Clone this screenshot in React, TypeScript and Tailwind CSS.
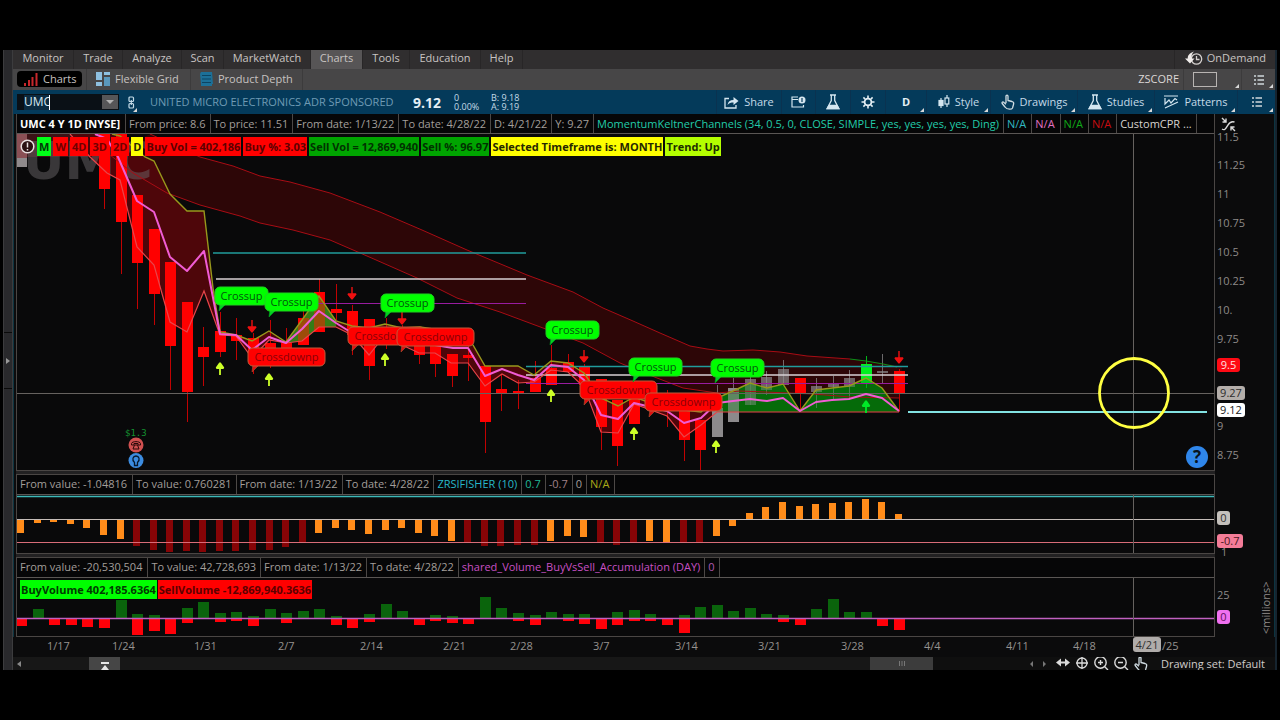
import React from "react";

const slot = (i: number) => 104 + 16.56 * i;

type Candle = [number, number, number, number, string];
const R = "#ff0000";
const G = "#8c8a8c";
const candles: Candle[] = [
  [134, 189, 134, 209, R], [134, 222, 134, 274, R], [195, 263, 195, 309, R], [229, 294, 229, 325, R],
  [262, 346, 262, 390, R], [302, 392, 302, 422, R], [347, 357, 327, 386, R], [331, 352, 312, 357, R],
  [335, 341, 318, 360, R], [338, 362, 333, 374, R], [343, 362, 320, 368, R], [343, 350, 328, 350, R],
  [318, 345, 310, 345, R], [292, 332, 279, 332, R], [309, 313, 284, 320, R], [311, 335, 305, 355, R],
  [319, 366, 319, 380, R], [335, 345, 318, 349, R], [333, 345, 325, 350, R], [340, 355, 340, 364, R],
  [340, 364, 340, 377, R], [354, 376, 354, 387, R], [355, 358, 345, 381, R], [366, 422, 366, 453, R],
  [389, 394, 375, 411, R], [391, 393, 380, 409, R], [378, 392, 361, 392, R], [368, 385, 345, 385, R],
  [362, 372, 354, 372, R], [367, 385, 364, 400, R], [379, 427, 379, 450, R], [400, 446, 400, 466, R],
  [395, 424, 395, 424, R], [395, 400, 390, 412, R], [398, 402, 390, 427, R], [408, 440, 408, 461, R],
  [420, 450, 420, 470, R], [408, 437, 385, 437, G], [388, 422, 378, 422, G], [379, 405, 372, 405, G],
  [377, 390, 371, 395, G], [369, 385, 360, 385, G], [378, 394, 378, 412, R], [386, 392, 378, 408, G],
  [384, 387, 376, 400, G], [378, 387, 370, 398, G], [364, 383, 356, 388, "#00f020"], [371, 373, 354, 383, G],
  [371, 394, 369, 412, R],
];

const upper = "112,134 120,136 145,157 154,161 170,194 187,211 204,211 213,288 220,332 236,335 252,341 269,331 286,342 302,320 319,296 336,321 352,326 369,328 385,324 402,328 420,327 453,332 473,345 485,366 502,366 518,366 534,375 551,361 568,363 584,373 601,398 618,406 634,397 651,403 684,410 701,412 717,398 733,391 750,383 767,388 783,384 800,411 816,390 832,388 849,386 866,378 882,388 899,411";
const lower = "899,412 717,412 701,425 684,437 667,416 651,410 634,404 618,433 601,432 584,387 568,372 551,370 534,382 518,383 502,374 485,386 468,363 451,363 435,353 419,353 402,345 385,335 369,355 352,335 336,327 319,327 302,341 286,343 269,340 252,358 236,336 220,335 204,291 187,332 170,322 154,265 137,247 120,180 107,173 90,157 70,134";
const mid = "95,134 107,139 118,157 137,201 154,212 170,257 187,271 204,251 220,334 236,335 252,350 269,337 286,343 302,329 319,311 336,323 352,333 369,341 385,332 402,336 435,345 453,348 468,348 485,376 502,369 518,375 534,380 551,365 568,367 584,380 601,415 618,419 634,403 651,407 667,411 684,423 701,418 717,403 733,401 750,399 767,401 783,398 800,411 816,402 832,400 849,399 866,394 882,398 899,411";
const bandTop = "150,134 200,157 233,166 260,176 290,182 330,193 380,212 422,230 467,250 527,275 573,292 603,308 633,321 660,333 690,346 707,349 723,351 753,350 780,352 807,356 850,359";
const bandBottom = "899,398 850,397 813,394 740,391 717,393 683,388 657,378 620,363 583,343 543,328 500,312 457,298 417,278 367,256 330,240 293,230 260,223 240,216 200,205 167,193 133,173 110,155";

const Bubble = ({ x, y, kind }: { x: number; y: number; kind: "up" | "down" }) => {
  const up = kind === "up";
  const w = up ? 53 : 77;
  return (
    <g>
      <path
        d={`M${x + 5} ${y + 16} L${x + 4} ${y + 24} L${x + 12} ${y + 16} Z`}
        fill={up ? "#00d020" : "#e01010"}
        stroke={up ? "#00a020" : "#b05030"}
        strokeWidth="0.6"
      />
      <rect x={x} y={y} width={w} height={18} rx={5} fill={up ? "#00ff00" : "#ff0000"} stroke={up ? "#20d020" : "#c05a3a"} />
      <text x={x + w / 2} y={y + 13} textAnchor="middle" fontSize="11" fill={up ? "#00560c" : "#8a0008"}>
        {up ? "Crossup" : "Crossdownp"}
      </text>
    </g>
  );
};

const Arrow = ({ x, y, dir, color }: { x: number; y: number; dir: "up" | "down"; color: string }) =>
  dir === "up" ? (
    <path d={`M${x} ${y + 13}V${y + 3}M${x - 3.5} ${y + 6}L${x} ${y + 1}L${x + 3.5} ${y + 6}Z`} stroke={color} strokeWidth="1.8" fill={color} strokeLinejoin="bevel" />
  ) : (
    <path d={`M${x} ${y}V${y + 10}M${x - 4} ${y + 7}L${x} ${y + 12}L${x + 4} ${y + 7}Z`} stroke={color} strokeWidth="1.4" fill={color} strokeLinejoin="bevel" />
  );

const PriceChart = () => (
  <svg className="block h-[336px] w-full" viewBox="17 134 1197 336" preserveAspectRatio="xMinYMin slice" role="img" aria-label="UMC daily price chart">
    <rect x="17" y="134" width="1197" height="336" fill="#09090a" />
    <rect x="17" y="134" width="80" height="23" fill="#3c1316" />
    <rect x="17" y="134" width="10" height="24" fill="#8a5055" />
    <rect x="17" y="158" width="10" height="9" fill="#8f8a8c" />
    <polygon points={`${bandTop} 883,363 902,367 ${bandBottom}`} fill="#2d0607" />
    <polygon points={`${upper} ${lower}`} fill="#4e060a" />
    <polygon points="269,331 286,342 302,320 319,296 336,321 336,327 319,327 302,341 286,343" fill="#1c6a20" />
    <polygon points="711,400 733,391 750,383 767,388 783,384 800,411 816,390 832,388 849,386 866,378 882,388 899,411 899,412 717,412" fill="#046006" />
    <text x="23" y="179" fontSize="51" fontWeight="700" fill="#6a6668" fillOpacity="0.5" className="font-['DejaVu_Sans',sans-serif]">UMC</text>
    {candles.map(([t, b, wt, wb, c], i) => (
      <g key={i} fill={c}>
        <rect x={Math.round(slot(i))} y={wt} width="1" height={wb - wt} fillOpacity="0.75" />
        <rect x={Math.round(slot(i)) - 5} y={t} width="11" height={b - t} fillOpacity={i > 38 && c === G ? 0.7 : 1} />
      </g>
    ))}
    <polygon points="302,320 319,296 336,321 336,327 319,327 302,341 288,342" fill="#4a8a10" fillOpacity="0.55" />
    <polygon points="711,400 733,391 750,383 767,388 783,384 800,411 816,390 832,388 849,386 866,378 882,388 899,411 717,412" fill="#0a8010" fillOpacity="0.35" />
    <g fill="none">
      <polyline points={bandTop} stroke="#a80c14" />
      <polyline points="850,359 866,361 883,364 897,367" stroke="#0c9018" />
      <polyline points={bandBottom} stroke="#a80c14" />
      <path d="M213 253H526M526 366.5H908" stroke="#209c9c" strokeWidth="1.6" />
      <path d="M216 279H526M526 375H908" stroke="#d8d0d4" strokeWidth="1.4" />
      <path d="M216 303.5H526M526 383.500H908" stroke="#981ca0" strokeWidth="1.2" />
      <path d="M17 393.5H1214M1133.5 134V470" stroke="#66625f" />
      <path d="M908 412H1207" stroke="#82e2e2" strokeWidth="2" />
      <polyline points={lower} stroke="#e8454a" strokeWidth="1.2" />
      <polyline points={upper} stroke="#98981c" strokeWidth="1.4" />
      <polyline points={mid} stroke="#f05cd4" strokeWidth="2" strokeLinejoin="round" />
    </g>
    {[[252, 320], [352, 287], [402, 312], [584, 350], [899, 351]].map(([x, y]) => (
      <Arrow key={x} x={x} y={y} dir="down" color="#f01010" />
    ))}
    {[[220, 362], [269, 373], [385, 353], [551, 389], [634, 427], [716, 440]].map(([x, y]) => (
      <Arrow key={x} x={x} y={y} dir="up" color="#cdff28" />
    ))}
    <Arrow x={866} y={400} dir="up" color="#00e828" />
    <Bubble x={215} y={287} kind="up" />
    <Bubble x={265} y={293} kind="up" />
    <Bubble x={381} y={294} kind="up" />
    <Bubble x={546} y={321} kind="up" />
    <Bubble x={248} y={348} kind="down" />
    <Bubble x={348} y={327} kind="down" />
    <Bubble x={397} y={328} kind="down" />
    <Bubble x={580} y={381} kind="down" />
    <Bubble x={645} y={393} kind="down" />
    <Bubble x={629} y={358} kind="up" />
    <Bubble x={711} y={359} kind="up" />
    <text x="125" y="436" fontSize="9" fill="#149030" className="font-['DejaVu_Sans_Mono',monospace]">$1.3</text>
    <circle cx="136" cy="445" r="7.5" fill="#d05050" />
    <path d="M131.500 443.500C132 441 140 441 140.500 443.500V445H138V443.500H134V445H131.500ZM133 449L134.500 445H137.500L139 449Z" fill="#d05050" stroke="#2a0808" />
    <circle cx="136" cy="460.500" r="7.500" fill="#3c8ce0" />
    <path d="M134.500 462.500C131.500 459.500 133 456 136 456C139 456 140.500 459.500 137.500 462.500V465.500H134.500Z" fill="none" stroke="#06182c" strokeWidth="1.300" />
    <circle cx="1134" cy="393" r="34.500" fill="none" stroke="#ffff42" strokeWidth="2.800" />
    <circle cx="1197" cy="457" r="11" fill="#2f86ea" />
    <text x="1197" y="463" textAnchor="middle" fontSize="17" fontWeight="700" fill="#081420">?</text>
  </svg>
);

const fisher = [533, 523, 522, 524, 528, 535, 539, 546, 550, 552, 551, 552, 551, 551, 550, 550, 547, 543, 533, 528, 530, 534, 530, 528, 533, 536, 541, 542, 546, 546, 545, 545, 541, 536, 537, 542, 545, 542, 541, 542, 542, 542, 536, 526, 513, 507, 502, 506, 504, 503, 502, 499, 502, 514];
const isWeak = (n: number) => (n >= 7 && n <= 17) || (n >= 27 && n <= 31) || (n >= 35 && n <= 37) || n === 40 || n === 41;

const FisherChart = () => (
  <svg className="block h-[58px] w-full" viewBox="17 495 1197 58" preserveAspectRatio="xMinYMin slice" role="img" aria-label="ZRSIFISHER histogram">
    <rect x="17" y="495" width="1197" height="58" fill="#09090a" />
    {fisher.map((v, n) => (
      <rect key={n} x={Math.round(slot(n - 5)) - 4} y={Math.min(v, 519)} width="7" height={Math.abs(v - 519)} fill={isWeak(n) ? "#860406" : "#ff8c1a"} />
    ))}
    <path d="M17 496.500H1214" stroke="#3cb8b8" strokeWidth="1.300" />
    <path d="M17 519.500H1214" stroke="#c4bcb8" />
    <path d="M17 542.500H1214" stroke="#d86c78" />
    <path d="M1133.500 495V553" stroke="#66625f" />
  </svg>
);

const volume: [number, number][] = [
  [0, 8], [9, 0], [0, 7], [0, 7], [0, 9], [0, 10], [18, 0], [4, 17], [3, 13], [0, 16], [10, 5], [16, 0], [5, 4], [6, 3], [2, 8], [9, 0], [5, 5], [7, 0], [9, 0], [2, 7], [0, 10], [4, 4], [14, 0], [7, 0], [0, 7], [3, 3], [2, 5], [0, 6], [21, 0], [10, 0], [5, 3], [3, 7], [6, 0], [4, 3], [4, 6], [0, 11], [6, 7], [8, 3], [4, 3], [0, 7], [3, 15], [11, 0], [13, 0], [7, 0], [10, 0], [4, 1], [3, 4], [0, 7], [9, 0], [19, 0], [6, 0], [6, 0], [0, 8], [0, 12],
];

const VolumeChart = () => (
  <svg className="block h-[58px] w-full" viewBox="17 578 1197 58" preserveAspectRatio="xMinYMin slice" role="img" aria-label="Buy and sell volume">
    <rect x="17" y="578" width="1197" height="58" fill="#09090a" />
    {volume.map(([up, down], n) => (
      <g key={n}>
        <rect x={Math.round(slot(n - 5)) - 5} y={618 - up} width="11" height={up} fill="#0a640c" />
        <rect x={Math.round(slot(n - 5)) - 5} y={618} width="11" height={down} fill="#ff0008" />
      </g>
    ))}
    <path d="M17 618.500H1214" stroke="#c060c0" strokeWidth="1.400" />
    <path d="M1133.500 578V636" stroke="#66625f" />
  </svg>
);

const Tag = ({ x, y, w, text, bg, fg }: { x: number; y: number; w: number; text: string; bg: string; fg: string }) => (
  <g>
    <rect x={x} y={y} width={w} height="14" rx="3" fill={bg} />
    <text x={x + w / 2} y={y + 11} textAnchor="middle" fontSize="11" fill={fg}>{text}</text>
  </g>
);

const prices: [string, number][] = [["11.5", 137], ["11.25", 165], ["11", 194], ["10.75", 223], ["10.5", 252], ["10.25", 281], ["10.", 310], ["9.75", 339], ["9", 426], ["8.75", 455]];

const PriceAxis = () => (
  <svg className="block h-[340px] w-full overflow-visible" viewBox="1215 134 59 340" preserveAspectRatio="xMinYMin slice" role="img" aria-label="Price scale">
    {prices.map(([p, y]) => (
      <text key={p} x="1217" y={y + 4} fontSize="11" fill="#8e8a88">{p}</text>
    ))}
    <Tag x={1217} y={358} w={23} text="9.5" bg="#ff0a14" fg="#ffe0e0" />
    <Tag x={1217} y={386} w={28} text="9.27" bg="#b4aeaa" fg="#2c2c2c" />
    <Tag x={1217} y={403} w={28} text="9.12" bg="#ffffff" fg="#202020" />
  </svg>
);

const Row = ({ cells, text = "leading-[17px]" }: { cells: [string, string][]; text?: string }) => (
  <div className={`flex h-[20px] items-stretch overflow-hidden border-b border-[#5a5654] bg-[#060607] text-[11px] whitespace-nowrap ${text}`}>
    {cells.map(([label, cls], i) => (
      <span key={i} className={`border-r border-[#4c4846] pl-[3px] ${label === "N/A" || i === 0 ? "pr-[5px]" : "pr-[4px]"} ${cls}`}>{label}</span>
    ))}
  </div>
);

const gray = "text-[#a39e9a]";
const Corner = () => <span className="absolute right-[2px] bottom-[2px] h-0 w-0 border-b-[4px] border-l-[4px] border-b-[#d8d8d8] border-l-transparent" />;

const Tool = ({ label, width, children, menu }: { label: string; width: string; children: React.ReactNode; menu?: boolean }) => (
  <button type="button" aria-label={label} className={`relative flex h-full items-center justify-center gap-[5px] border-l border-[#0a3250] text-[11px] text-[#c4dbe8] ${width}`}>
    {children}
    {menu && <Corner />}
  </button>
);

const Flask = () => (
  <svg width="14" height="16" viewBox="0 0 14 16" fill="none" stroke="#d4e6f0" strokeWidth="1.300">
    <path d="M4 1H10M5.300 1V6.500L1.200 14.500H12.800L8.700 6.500V1" />
    <path d="M3 11.500H11L12.800 14.500H1.200Z" fill="#d4e6f0" />
  </svg>
);
const ListIcon = () => (
  <svg width="12" height="12" viewBox="0 0 12 12" stroke="#d0d8dc" strokeWidth="1.500">
    <path d="M1 2H3M4.500 2H11M1 6H3M4.500 6H11M1 10H3M4.500 10H11" />
  </svg>
);
const Hand = () => (
  <svg width="14" height="16" viewBox="0 0 14 16" fill="none" stroke="#d0dce2" strokeWidth="1.300" strokeLinejoin="round">
    <path d="M5 9V2.200C5 .7 7 .7 7 2.200V6.500L11 7.500C12.500 8 13 9 12.500 10.500L11.500 14C11 15 10 15.300 8.500 15.200C6 15.200 5 14.500 4 13L1.200 9.500C.6 8 2 7.500 3 8.500L5 10.300" />
  </svg>
);

const menus: [string, string][] = [["Monitor", "w-[61px]"], ["Trade", "w-[49px]"], ["Analyze", "w-[59px]"], ["Scan", "w-[42px]"], ["MarketWatch", "w-[87px]"], ["Charts", "w-[52px]"], ["Tools", "w-[47px]"], ["Education", "w-[71px]"], ["Help", "w-[42px]"]];

const dates: [string, number][] = [["1/17", 47], ["1/24", 112], ["1/31", 194], ["2/7", 278], ["2/14", 360], ["2/21", 443], ["2/28", 510], ["3/7", 593], ["3/14", 675], ["3/21", 758], ["3/28", 841], ["4/4", 924], ["4/11", 1006], ["4/18", 1073]];

const frames: [string, string][] = [
  ["M", "bg-[#00ff18] text-[#003a08]"], ["W", "bg-[#ff0000] text-[#6e0000]"], ["4D", "bg-[#ff0000] text-[#6e0000]"],
  ["3D", "bg-[#ff0000] text-[#6e0000]"], ["2D", "bg-[#ff0000] text-[#6e0000]"], ["D", "bg-[#ffff00] text-[#262600]"],
];
const stats: [string, string][] = [
  ["Buy Vol = 402,186", "bg-[#ff0000] text-[#5c0000]"], ["Buy %: 3.03", "bg-[#ff0000] text-[#5c0000]"],
  ["Sell Vol = 12,869,940", "bg-[#00a400] text-[#003200]"], ["Sell %: 96.97", "bg-[#00a400] text-[#003200]"],
  ["Selected Timeframe is: MONTH", "bg-[#ffff00] text-[#262600]"], ["Trend: Up", "bg-[#b4ff00] text-[#1c2c00]"],
];

export default function App() {
  return (
    <div className="min-h-screen overflow-hidden bg-black py-[50px] font-['Open_Sans','Noto_Sans',sans-serif] text-[11px]">
      <div className="flex h-[620px] items-stretch">
        <aside className="ml-[3px] flex w-[10px] flex-col border-x border-[#3c3c3e] bg-[#29292c]">
          <div className="h-[282px]" />
          <button type="button" aria-label="Expand sidebar" className="flex h-[57px] items-center justify-center border-y border-[#0a0a0a]">
            <svg width="4" height="6" viewBox="0 0 4 6"><path d="M0 0L4 3L0 6Z" fill="#999" /></svg>
          </button>
        </aside>
        <div className="flex min-w-0 flex-1 flex-col bg-[#0b0b0c]">
          <nav className="flex h-[19px] items-stretch bg-[#302e2f] text-[#c8c4c2]">
            {menus.map(([m, w]) => (
              <button key={m} type="button" className={`border-r border-[#282627] pb-[3px] text-center leading-[16px] ${w} ${m === "Charts" ? "bg-[#575556]" : ""}`}>{m}</button>
            ))}
            <button type="button" className="mr-[9px] ml-auto flex items-center gap-[4px] border-l border-[#282627] pb-[3px] pl-[10px] leading-[16px]">
              <svg width="18" height="14" viewBox="0 0 18 14" fill="none" stroke="#d4d0ce" strokeWidth="1.300">
                <circle cx="11.500" cy="8" r="5.200" /><path d="M11.500 5V8.500H14.500" />
                <path d="M9 .5C4 2 2.500 5 2.800 7.500H0L5 12.500L9.500 7.500H6.800C6 4.500 7 2.500 9 .5Z" fill="#f0ecea" stroke="none" />
              </svg>
              OnDemand
            </button>
          </nav>

          <div className="flex h-[21px] items-stretch bg-[#474647] pl-[4px] text-[#c6c2c0]">
            <button type="button" className="mt-[2px] mb-[3px] flex w-[65px] items-center gap-[5px] rounded-[4px] bg-black pl-[7px] leading-[16px]">
              <svg width="14" height="13" viewBox="0 0 14 13" fill="#c8282c"><path d="M0 10H2V13H0ZM4 7H6V13H4ZM7.500 4H9.500V13H7.500ZM11.500 0H13.500V13H11.500Z" /></svg>
              Charts
            </button>
            <button type="button" className="ml-[4px] flex w-[104px] items-center gap-[5px] border-l border-[#3c3b3c] pb-px pl-[9px]">
              <svg width="14" height="14" viewBox="0 0 14 14"><path d="M0 0H6V8H0ZM0 10H6V14H0ZM8 0H14V3H8Z" fill="#8ec0e0" /><path d="M8 5H14V14H8Z" fill="#5a98bc" /></svg>
              Flexible Grid
            </button>
            <button type="button" className="flex w-[113px] items-center gap-[5px] border-x border-[#3c3b3c] pb-px pl-[9px]">
              <svg width="13" height="14" viewBox="0 0 13 14"><path d="M1 0H12L13 12H12V14H1V12L0 2Z" fill="#1c7098" /><path d="M2 3.500H11M2 7H11M2 10.500H11" stroke="#0c4462" /></svg>
              Product Depth
            </button>
            <span className="ml-auto self-center pr-[4px] text-[#dcd8d6]">ZSCORE</span>
            <button type="button" aria-label="Layout" className="relative flex w-[58px] items-center border-l border-[#3c3b3c] pl-[9px]">
              <span className="h-[15px] w-[24px] border border-[#b8b4b2]" /><Corner />
            </button>
            <button type="button" aria-label="Workspace menu" className="relative flex w-[34px] items-center justify-center border-l border-[#3c3b3c]"><ListIcon /><Corner /></button>
          </div>

          <div className="flex h-[24px] items-center bg-[#043a5a] pl-[4px] text-[#c4dbe8]">
            <div className="flex h-[16px] w-[102px] items-center bg-[#0a1016] pl-[7px]">
              <input aria-label="Symbol" defaultValue="UMC" className="h-[15px] w-[25px] bg-[#0b2a40] text-[12px] text-[#d8e8f2] outline-none" />
              <span className="h-[15px] w-px bg-white" />
              <button type="button" aria-label="Symbol list" className="mr-px ml-auto flex h-[14px] w-[16px] items-center justify-center bg-[#565658]">
                <svg width="8" height="4" viewBox="0 0 8 4"><path d="M0 0H8L4 4Z" fill="#b0b0b0" /></svg>
              </button>
            </div>
            <button type="button" aria-label="Link" className="relative ml-[4px] flex h-full w-[16px] items-center justify-center">
              <svg width="7" height="13" viewBox="0 0 7 13" fill="none" stroke="#c4dbe8" strokeWidth="1.200"><rect x="1" y="1" width="4.500" height="4.500" rx="1" /><rect x="1" y="7.500" width="4.500" height="4.500" rx="1" /><path d="M3.300 4V9" /></svg>
              <Corner />
            </button>
            <span className="ml-[11px] text-[#6f9ab4]">UNITED MICRO ELECTRONICS ADR SPONSORED</span>
            <span className="ml-auto w-[41px] text-[14px] font-bold text-[#e4eef4]">9.12</span>
            <span className="w-[37px] text-[9px] leading-[9px]">0<br />0.00%</span>
            <span className="w-[225px] text-[9px] leading-[9px]">B: 9.18<br />A: 9.19</span>
            <Tool label="Share" width="w-[65px]">
              <svg width="15" height="13" viewBox="0 0 15 13" fill="none" stroke="#d4e6f0" strokeWidth="1.300"><path d="M5 2.500H1V12H12V9" /><path d="M3.500 9C4 5.500 6 4 9.500 4V1L14.500 5L9.500 9V6.500C7 6.500 5 7 3.500 9Z" fill="#d4e6f0" stroke="none" /></svg>
              Share
            </Tool>
            <Tool label="Notes" width="w-[34px]">
              <svg width="15" height="12" viewBox="0 0 15 12" fill="none" stroke="#d4e6f0" strokeWidth="1.200"><path d="M7 1H1V11H12.500V9M1 3.500H7" /><circle cx="11" cy="4" r="3.500" fill="#d4e6f0" stroke="none" /><path d="M11 2V6" stroke="#043a5a" /></svg>
            </Tool>
            <Tool label="Edit studies" width="w-[35px]"><Flask /></Tool>
            <Tool label="Settings" width="w-[35px]">
              <svg width="14" height="14" viewBox="0 0 14 14" fill="none" stroke="#e4eef4"><circle cx="7" cy="7" r="3.400" strokeWidth="1.800" /><path d="M7 .5V3M7 11V13.500M.5 7H3M11 7H13.500M2.400 2.400L4.200 4.200M9.800 9.800L11.600 11.600M2.400 11.600L4.200 9.800M9.800 4.200L11.600 2.400" strokeWidth="1.600" /></svg>
            </Tool>
            <Tool label="Timeframe" width="w-[41px]" menu><b className="text-[#e4eef4]">D</b></Tool>
            <Tool label="Style" width="w-[64px]" menu>
              <svg width="12" height="14" viewBox="0 0 12 14" fill="none" stroke="#d4e6f0" strokeWidth="1.200"><path d="M3 3V13M9 0V3M9 9V12" /><rect x="1" y="5.500" width="4" height="5" fill="#d4e6f0" /><rect x="7" y="3" width="3.800" height="6" /></svg>
              Style
            </Tool>
            <Tool label="Drawings" width="w-[87px]" menu><Hand />Drawings</Tool>
            <Tool label="Studies" width="w-[77px]" menu><Flask />Studies</Tool>
            <Tool label="Patterns" width="w-[83px]" menu>
              <svg width="15" height="14" viewBox="0 0 15 14" fill="none" stroke="#d4e6f0" strokeWidth="1.200"><path d="M0 1H14M1 13L14 7M1 3V9L5 5L7 8L11 3.500L13 5" /></svg>
              Patterns
            </Tool>
            <Tool label="Chart menu" width="w-[38px]" menu><ListIcon /></Tool>
          </div>

          <div className="flex flex-1 items-stretch border-x border-[#0c3440] pl-[2px]">
            <main className="flex min-w-0 flex-1 flex-col">
              <section className="border-x border-[#4a4644]">
                <Row
                  text="leading-[19px]"
                  cells={[
                    ["UMC 4 Y 1D [NYSE]", "font-bold text-white"], ["From price: 8.6", gray], ["To price: 11.51", gray], ["From date: 1/13/22", gray], ["To date: 4/28/22", gray], ["D: 4/21/22", gray], ["Y: 9.27", gray],
                    ["MomentumKeltnerChannels (34, 0.5, 0, CLOSE, SIMPLE, yes, yes, yes, yes, Ding)", "text-[#22ccaa]"],
                    ["N/A", "text-[#30b8c0]"], ["N/A", "text-[#e070c0]"], ["N/A", "text-[#10a818]"], ["N/A", "text-[#c80c10]"], ["CustomCPR ...", "text-[#d8d4d0]"],
                  ]}
                />
                <div className="relative border-b border-[#4a4644]">
                  <PriceChart />
                  <div className="absolute top-[3px] left-[3px] flex items-center gap-[2px] text-[11px] leading-[19px] font-bold whitespace-nowrap">
                    <svg width="15" height="15" viewBox="0 0 15 15" fill="none" stroke="#e8e0e0" strokeWidth="1.500"><circle cx="7.500" cy="7.500" r="6.300" fill="#2a1012" /><path d="M7.500 3.500V8.500M7.500 10V11.500" /></svg>
                    {frames.map(([t, c]) => (
                      <span key={t} className={`px-[2px] ${c}`}>{t}</span>
                    ))}
                    {stats.map(([t, c]) => (
                      <span key={t} className={`px-px ${c}`}>{t}</span>
                    ))}
                  </div>
                </div>
              </section>
              <div className="h-[3px] bg-[#222122]" />
              <section className="border border-[#4a4644]">
                <Row cells={[["From value: -1.04816", gray], ["To value: 0.760281", gray], ["From date: 1/13/22", gray], ["To date: 4/28/22", gray], ["ZRSIFISHER (10)", "text-[#28b8c8]"], ["0.7", "text-[#22b898]"], ["-0.7", "text-[#a08088]"], ["0", gray], ["N/A", "text-[#a8a818]"]]} />
                <FisherChart />
              </section>
              <div className="h-[3px] bg-[#222122]" />
              <section className="border border-[#4a4644]">
                <Row cells={[["From value: -20,530,504", gray], ["To value: 42,728,693", gray], ["From date: 1/13/22", gray], ["To date: 4/28/22", gray], ["shared_Volume_BuyVsSell_Accumulation (DAY)", "text-[#c850c4]"], ["0", "text-[#b058b0]"]]} />
                <div className="relative">
                  <VolumeChart />
                  <div className="absolute top-[2px] left-[3px] flex gap-px text-[11px] leading-[19px] font-bold whitespace-nowrap">
                    <span className="bg-[#00ff00] px-px text-[#003c00]">BuyVolume 402,185.6364</span>
                    <span className="bg-[#ff0000] px-px text-[#5c0000]">SellVolume -12,869,940.3636</span>
                  </div>
                </div>
              </section>
            </main>
            <div className="flex w-[59px] flex-col">
              <div className="flex h-[20px] items-center pl-[6px]">
                <svg width="15" height="15" viewBox="0 0 15 15" fill="none" stroke="#dcdcdc" strokeWidth="1.400"><path d="M1 1L5 5M5 1.500V5H1.500M14 14L10 10M10 13.500V10H13.500" /><path d="M1 12C4 14 5 11 7 8C8.500 5.500 10.500 4 13.500 5" /></svg>
              </div>
              <PriceAxis />
              <svg className="block h-[83px] w-full overflow-visible" viewBox="1215 474 59 83" role="img" aria-label="Fisher scale">
                <Tag x={1217} y={511} w={13} text="0" bg="#c4c0bc" fg="#303030" />
                <text x="1221" y="556" fontSize="11" fill="#8e8a88">1</text>
                <Tag x={1217} y={534} w={26} text="-0.7" bg="#f47c98" fg="#481420" />
              </svg>
              <svg className="block h-[80px] w-full overflow-visible" viewBox="1215 557 59 80" role="img" aria-label="Volume scale">
                <text x="1217" y="599" fontSize="11" fill="#8e8a88">25</text>
                <Tag x={1217} y={610} w={13} text="0" bg="#f070f0" fg="#601060" />
                <text transform="translate(1270 634) rotate(-90)" fontSize="11" fill="#8e8a88">&lt;millions&gt;</text>
              </svg>
            </div>
          </div>

          <svg className="block h-[20px] w-full" viewBox="13 637 1262 20" preserveAspectRatio="xMinYMin slice" role="img" aria-label="Date scale">
            {dates.map(([d, x]) => (
              <text key={d} x={x} y="650" fontSize="11" fill="#96928f">{d}</text>
            ))}
            <text x="1162" y="650" fontSize="11" fill="#96928f">/25</text>
            <rect x="1133" y="637" width="28" height="15" rx="3" fill="#b0acaa" />
            <text x="1147" y="649" textAnchor="middle" fontSize="11" fill="#303030">4/21</text>
          </svg>

          <footer className="flex h-[13px] items-stretch overflow-hidden bg-[#171717] text-[#d0ccca]">
            <button type="button" aria-label="Scroll left" className="flex w-[76px] items-center pl-[4px]"><svg width="4" height="6" viewBox="0 0 4 6"><path d="M4 0L0 3L4 6Z" fill="#888" /></svg></button>
            <button type="button" aria-label="Expand panel" className="flex w-[31px] items-end justify-center bg-[#464646]"><svg width="10" height="8" viewBox="0 0 10 8"><path d="M1 0H9V2H1ZM5 3L9 8H1Z" fill="#e8e8e8" /></svg></button>
            <button type="button" aria-label="Scroll bar" className="ml-auto flex w-[63px] items-center justify-center bg-[#3c3c3c]"><svg width="6" height="5" viewBox="0 0 6 5"><path d="M.5 0V5M3 0V5M5.500 0V5" stroke="#777" /></svg></button>
            <div className="flex w-[342px] items-center justify-end bg-[#0f0f0f]">
              <svg className="mr-[10px]" width="16" height="6" viewBox="0 0 16 6"><path d="M3 0L0 3L3 6ZM13 0L16 3L13 6Z" fill="#777" /></svg>
              <div className="flex items-start gap-[5px] text-[#dcdcdc]">
                <svg width="14" height="13" viewBox="0 0 14 13"><path d="M0 6.500L5 2.500V5.500H9V2.500L14 6.500L9 10.500V7.500H5V10.500Z" fill="currentColor" /></svg>
                <svg width="14" height="13" viewBox="0 0 14 13" fill="none" stroke="currentColor" strokeWidth="1.300"><circle cx="7" cy="7" r="5" /><path d="M7 1V13M1 7H13" /></svg>
                <svg width="15" height="14" viewBox="0 0 15 14" fill="none" stroke="currentColor" strokeWidth="1.400"><circle cx="6.500" cy="6.500" r="5.700" /><path d="M4 6.500H9M6.500 4V9M10.500 10.500L14 14" /></svg>
                <svg width="15" height="14" viewBox="0 0 15 14" fill="none" stroke="currentColor" strokeWidth="1.400"><circle cx="6.500" cy="6.500" r="5.700" /><path d="M4 6.500H9M10.500 10.500L14 14" /></svg>
                <Hand />
              </div>
              <button type="button" className="mr-[10px] ml-[13px] leading-[13px] whitespace-nowrap">Drawing set: Default</button>
            </div>
          </footer>
        </div>
        <div className="w-[5px] border-l-2 border-[#16242f]" />
      </div>
    </div>
  );
}
